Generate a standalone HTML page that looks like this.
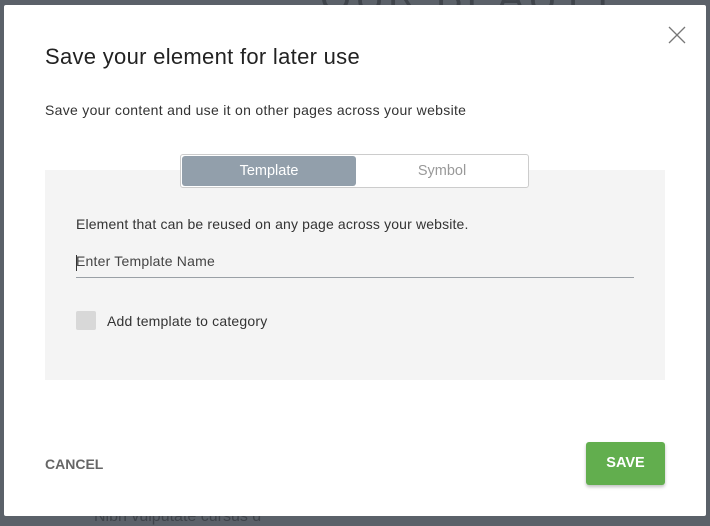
<!DOCTYPE html>
<html><head><style>
*{margin:0;padding:0;box-sizing:border-box}
body{width:710px;height:520px;background:#5b6169;position:relative;overflow:hidden;font-family:"Liberation Sans",sans-serif}
.bgt{position:absolute;left:320px;top:-24px;font-size:40px;color:#3f444b;letter-spacing:4px}
.bgb{position:absolute;left:94px;top:508px;font-size:16px;color:#3f444b}
.m{position:absolute;left:4px;top:5px;width:702px;height:511px;background:#fff;border-radius:2px}
.t{position:absolute;left:45px;top:44px;font-size:22px;color:#222;letter-spacing:0.3px}
.s{position:absolute;left:45px;top:102px;font-size:14px;color:#333;letter-spacing:0.3px}
.p{position:absolute;left:45px;top:170px;width:620px;height:210px;background:#f4f4f4}
.tg{position:absolute;left:180px;top:154px;width:349px;height:34px;border:1px solid #ccc;border-radius:3px;background:#fff}
.tp{position:absolute;left:1px;top:1px;width:174px;height:30px;background:#929fab;border-radius:3px;color:#fff;font-size:14.5px;text-align:center;line-height:30px}
.sy{position:absolute;left:175px;top:1px;width:172px;height:30px;color:#999;font-size:14.5px;text-align:center;line-height:30px}
.e{position:absolute;left:76px;top:216px;font-size:14px;color:#333;letter-spacing:0.15px}
.in{position:absolute;left:76px;top:253px;width:558px;height:25px;border-bottom:1px solid #9aa0a6;font-size:14px;color:#444;letter-spacing:0.2px}
.cur{position:absolute;left:76px;top:255px;width:1px;height:16px;background:#333}
.cb{position:absolute;left:76px;top:311px;width:20px;height:19px;background:#d8d8d8;border-radius:2px}
.cl{position:absolute;left:107px;top:313px;font-size:14px;color:#333;letter-spacing:0.2px}
.c{position:absolute;left:45px;top:456px;font-size:14px;font-weight:bold;color:#666}
.sv{position:absolute;left:586px;top:442px;width:79px;height:43px;background:#62ae4e;border-radius:3px;color:#fff;font-weight:bold;font-size:14.5px;text-align:center;line-height:43px;box-shadow:0 2px 3px rgba(0,0,0,.25)}
</style></head><body>
<div class="bgt">OUR BEAUTY SALON</div>
<div class="bgb">Nibh vulputate cursus d</div>
<div class="m"></div>
<svg style="position:absolute;left:668px;top:26px" width="18" height="18"><path d="M1 1L17 17M17 1L1 17" stroke="#777" stroke-width="1.3"/></svg>
<div class="t">Save your element for later use</div>
<div class="s">Save your content and use it on other pages across your website</div>
<div class="p"></div>
<div class="tg"><div class="tp">Template</div><div class="sy">Symbol</div></div>
<div class="e">Element that can be reused on any page across your website.</div>
<div class="in">Enter Template Name</div>
<div class="cur"></div>
<div class="cb"></div>
<div class="cl">Add template to category</div>
<div class="c">CANCEL</div>
<div class="sv">SAVE</div>
</body></html>
